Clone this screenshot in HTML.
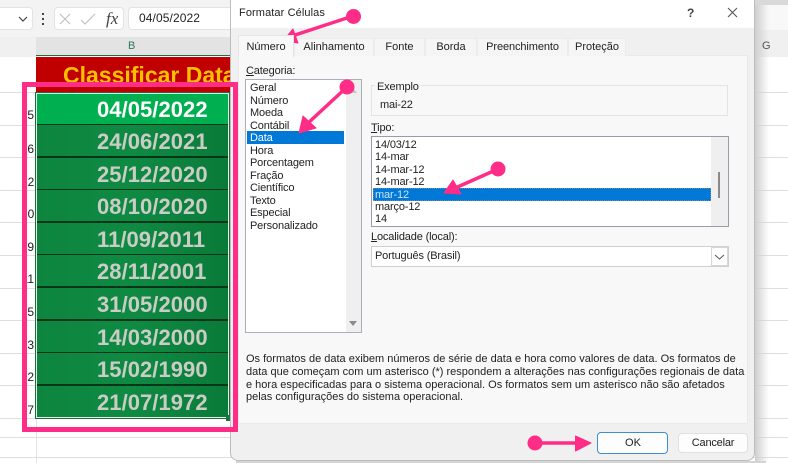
<!DOCTYPE html>
<html lang="pt-BR"><head><meta charset="utf-8"><title>Formatar Células</title>
<style>
html,body{margin:0;padding:0}
body{width:788px;height:463px;overflow:hidden;position:relative;background:#fff;font-family:"Liberation Sans",sans-serif;color:#222}
div,span{position:absolute;box-sizing:border-box}
.t{font-size:11px;line-height:13px;white-space:nowrap;letter-spacing:-.15px}
.p{font-size:11px;line-height:13px;white-space:nowrap;letter-spacing:0;left:246px}
.g{left:0;width:788px;height:1px;background:#dedede}
.d{left:36px;width:193px;height:33px;border-bottom:2px solid #06351a;background:linear-gradient(90deg,#0d853f,#0f8a43 50%,#0a7a39);color:#c9cdc6;font-weight:bold;font-size:22px;line-height:33px;padding-left:61px;letter-spacing:.05px}
.r{left:26px;width:8px;font-size:12px;line-height:14px;text-align:right;color:#222}
.tab{top:38px;height:18px;background:#f5f5f5;border:1px solid #ececec;border-bottom:0;font-size:11px;line-height:17px;text-align:center;letter-spacing:0}
</style></head><body>

<!-- top toolbar -->
<div style="left:0;top:0;width:788px;height:37px;background:#f3f3f3"></div>
<div style="left:-5px;top:7px;width:38px;height:23px;background:#fff;border:1px solid #e3e3e3;border-radius:4px"></div>
<div style="left:54px;top:7px;width:70px;height:23px;background:#fff;border:1px solid #e3e3e3;border-radius:4px"></div>
<svg style="position:absolute;left:0;top:0" width="240" height="37" fill="none">
<path d="M19 17l4 4 4-4" stroke="#444" stroke-width="1.2"/>
<rect x="42" y="13" width="2" height="2" fill="#444"/><rect x="42" y="18" width="2" height="2" fill="#444"/><rect x="42" y="23" width="2" height="2" fill="#444"/>
<path d="M60 14l10 10M70 14l-10 10" stroke="#c2c2c2" stroke-width="1.2"/>
<path d="M81 20l4 4 10-10" stroke="#c2c2c2" stroke-width="1.2"/>
</svg>
<span style="left:106px;top:9px;font:italic 17px/19px 'Liberation Serif',serif;color:#444">fx</span>
<div style="left:128px;top:7px;width:110px;height:23px;background:#fff;border:1px solid #e3e3e3;border-radius:4px"></div>
<span style="left:139px;top:11px;font-size:12px;line-height:15px;letter-spacing:.1px;white-space:nowrap">04/05/2022</span>

<!-- sheet headers -->
<div style="left:0;top:37px;width:36px;height:20px;background:#f0f0f0"></div>
<div style="left:36px;top:37px;width:195px;height:19px;background:#e3e3e3;border-bottom:1px solid #1e7145"></div>
<span style="left:128px;top:40px;font-size:11px;line-height:13px;color:#2d7a58">B</span>
<div style="left:755px;top:0;width:33px;height:5px;background:#d9d9d9"></div>
<div style="left:755px;top:5px;width:33px;height:25px;background:#f8f8f8"></div>
<div style="left:755px;top:30px;width:33px;height:27px;background:#f0f0f0"></div>

<!-- gridlines -->
<div class="g" style="top:92px"></div><div class="g" style="top:125px"></div><div class="g" style="top:157px"></div><div class="g" style="top:190px"></div><div class="g" style="top:222px"></div><div class="g" style="top:255px"></div><div class="g" style="top:288px"></div><div class="g" style="top:320px"></div><div class="g" style="top:353px"></div><div class="g" style="top:385px"></div><div class="g" style="top:418px"></div><div class="g" style="top:437px"></div><div class="g" style="top:457px"></div>
<div style="left:36px;top:57px;width:1px;height:406px;background:#e2e2e2"></div>

<!-- title -->
<div style="left:36px;top:57px;width:195px;height:36px;background:#c00000;overflow:hidden;color:#ffc000;font-weight:bold;font-size:23px;line-height:36px;padding-left:27px;white-space:nowrap">Classificar Data</div>

<!-- date cells -->
<div class="d" style="top:93px;background:#00b050;color:#fff">04/05/2022</div>
<div class="d" style="top:125px">24/06/2021</div>
<div class="d" style="top:158px">25/12/2020</div>
<div class="d" style="top:190px">08/10/2020</div>
<div class="d" style="top:223px">11/09/2011</div>
<div class="d" style="top:255px">28/11/2001</div>
<div class="d" style="top:288px">31/05/2000</div>
<div class="d" style="top:321px">14/03/2000</div>
<div class="d" style="top:353px">15/02/1990</div>
<div class="d" style="top:386px;height:32px;border-bottom:0">21/07/1972</div>
<div style="left:36px;top:93px;width:193px;height:325px;border:1px solid #e4efe8;outline:1px solid #1e6b3f"></div>
<div style="left:226px;top:415px;width:6px;height:6px;background:#1e7145"></div>

<span class="r" style="top:108px">5</span><span class="r" style="top:142px">6</span><span class="r" style="top:175px;left:21px;width:13px">12</span><span class="r" style="top:207px;left:21px;width:13px">10</span><span class="r" style="top:240px">9</span><span class="r" style="top:272px;left:21px;width:13px">11</span><span class="r" style="top:305px">5</span><span class="r" style="top:338px">3</span><span class="r" style="top:370px">2</span><span class="r" style="top:403px">7</span>

<!-- dialog shadow -->
<div style="left:755px;top:5px;width:14px;height:458px;background:linear-gradient(90deg,#cfcfcf,rgba(240,240,240,0))"></div>
<div style="left:236px;top:461px;width:530px;height:2px;background:#d4d4d4"></div>
<span style="left:762px;top:40px;font-size:11px;line-height:13px;color:#555">G</span>

<!-- dialog -->
<div style="left:230px;top:0;width:525px;height:461px;background:#f0f0f0;border:1px solid #bdbdbd;border-top:0;border-radius:0 0 8px 8px;overflow:hidden"></div>
<div style="left:231px;top:0;width:523px;height:28px;background:#fff"></div>
<span class="t" style="left:239px;top:7px;letter-spacing:.1px">Formatar Células</span>
<span style="left:687px;top:6px;font-size:12px;line-height:14px;font-weight:bold;color:#444">?</span>
<svg style="position:absolute;left:725px;top:5px" width="16" height="16" fill="none"><path d="M3 3l9 9M12 3l-9 9" stroke="#555" stroke-width="1.1"/></svg>

<!-- panel -->
<div style="left:238px;top:55px;width:510px;height:369px;background:#f8f8f8;border:1px solid #eaeaea"></div>
<div class="tab" style="left:238px;top:35px;width:56px;height:22px;background:#f8f8f8;border-color:#e4e4e4;line-height:22px;z-index:2;border-bottom:0">Número</div>
<div class="tab" style="left:294px;width:80px">Alinhamento</div>
<div class="tab" style="left:374px;width:51px">Fonte</div>
<div class="tab" style="left:425px;width:52px">Borda</div>
<div class="tab" style="left:477px;width:91px;letter-spacing:-.1px">Preenchimento</div>
<div class="tab" style="left:568px;width:58px">Proteção</div>

<!-- Categoria -->
<span class="t" style="left:246px;top:65px"><u>C</u>ategoria:</span>
<div style="left:245px;top:79px;width:117px;height:254px;background:#fff;border:1px solid #a9aeb8"></div>
<div style="left:346px;top:80px;width:15px;height:252px;background:#efefef"></div>
<svg style="position:absolute;left:346px;top:80px" width="15" height="252"><path d="M3 13l4-5 4 5z" fill="#c4c4c4"/><path d="M3 241h8l-4 5z" fill="#8a8a8a"/></svg>
<div style="left:247px;top:131px;width:97px;height:13px;background:#0078d7"></div>
<span class="t" style="left:250px;top:82px">Geral</span>
<span class="t" style="left:250px;top:95px">Número</span>
<span class="t" style="left:250px;top:107px">Moeda</span>
<span class="t" style="left:250px;top:120px">Contábil</span>
<span class="t" style="left:250px;top:132px;color:#fff">Data</span>
<span class="t" style="left:250px;top:145px">Hora</span>
<span class="t" style="left:250px;top:157px">Porcentagem</span>
<span class="t" style="left:250px;top:170px">Fração</span>
<span class="t" style="left:250px;top:182px">Científico</span>
<span class="t" style="left:250px;top:195px">Texto</span>
<span class="t" style="left:250px;top:207px">Especial</span>
<span class="t" style="left:250px;top:220px">Personalizado</span>

<!-- Exemplo -->
<div style="left:371px;top:85px;width:357px;height:31px;border:1px solid #e4e4e4"></div>
<span class="t" style="left:375px;top:81px;background:#f8f8f8;padding:0 2px">Exemplo</span>
<span class="t" style="left:380px;top:99px">mai-22</span>

<!-- Tipo -->
<span class="t" style="left:371px;top:122px"><u>T</u>ipo:</span>
<div style="left:371px;top:136px;width:358px;height:91px;background:#fff;border:1px solid #979ca8"></div>
<div style="left:711px;top:137px;width:17px;height:89px;background:#efefef"></div>
<div style="left:718px;top:172px;width:2px;height:26px;background:#8a8a8a"></div>
<div style="left:373px;top:188px;width:338px;height:13px;background:#0078d7;border:1px dotted rgba(190,150,110,.6)"></div>
<span class="t" style="left:375px;top:139px">14/03/12</span>
<span class="t" style="left:375px;top:151px">14-mar</span>
<span class="t" style="left:375px;top:164px">14-mar-12</span>
<span class="t" style="left:375px;top:176px">14-mar-12</span>
<span class="t" style="left:375px;top:189px;color:#cfe4f7">mar-12</span>
<span class="t" style="left:375px;top:201px">março-12</span>
<span class="t" style="left:375px;top:213px">14</span>

<!-- Localidade -->
<span class="t" style="left:371px;top:231px"><u>L</u>ocalidade (local):</span>
<div style="left:371px;top:246px;width:358px;height:21px;background:#fff;border:1px solid #cfcfcf"></div>
<span class="t" style="left:375px;top:250px">Português (Brasil)</span>
<div style="left:711px;top:247px;width:17px;height:19px;background:#fff;border:1px solid #d6d6d6"></div>
<svg style="position:absolute;left:711px;top:247px" width="17" height="19" fill="none"><path d="M4 8l4.500 4 4.500-4" stroke="#555" stroke-width="1"/></svg>

<!-- description -->
<span class="p" style="top:353px">Os formatos de data exibem números de série de data e hora como valores de data. Os formatos de</span>
<span class="p" style="top:366px">data que começam com um asterisco (*) respondem a alterações nas configurações regionais de data</span>
<span class="p" style="top:379px">e hora especificadas para o sistema operacional. Os formatos sem um asterisco não são afetados</span>
<span class="p" style="top:391px">pelas configurações do sistema operacional.</span>

<!-- buttons -->
<div style="left:597px;top:432px;width:71px;height:22px;background:#fdfdfd;border:1px solid #3d8fd1;border-radius:4px;font-size:11px;line-height:20px;text-align:center;padding-left:1px">OK</div>
<div style="left:678px;top:433px;width:70px;height:20px;background:#fdfdfd;border:1px solid #e0e0e0;border-radius:4px;font-size:11px;line-height:18px;text-align:center;letter-spacing:-.2px">Cancelar</div>

<!-- pink box -->
<div style="left:22px;top:82px;width:216px;height:350px;border:5px solid #ff2d87"></div>

<!-- arrows -->
<svg style="position:absolute;left:0;top:0" width="788" height="463" fill="#ff2d87" stroke="#ff2d87" stroke-linejoin="round">
<circle cx="353.500" cy="16.500" r="7.500" stroke="none"/>
<path d="M353 16L292 36" stroke-width="3.500" fill="none"/>
<path d="M283 41L293 29L298 43z" stroke-width="1"/>
<circle cx="347" cy="87" r="7.500" stroke="none"/>
<path d="M347 87L307 124" stroke-width="3.500" fill="none"/>
<path d="M299 133L303 116L316 128z" stroke-width="1"/>
<circle cx="498" cy="169" r="7.500" stroke="none"/>
<path d="M498 169L453 189" stroke-width="3.500" fill="none"/>
<path d="M444 193L453 180L461 194z" stroke-width="1"/>
<circle cx="535" cy="443" r="7.500" stroke="none"/>
<path d="M535 443H578" stroke-width="3.500" fill="none"/>
<path d="M591 443L575.500 436V451z" stroke-width="1"/>
</svg>
</body></html>
